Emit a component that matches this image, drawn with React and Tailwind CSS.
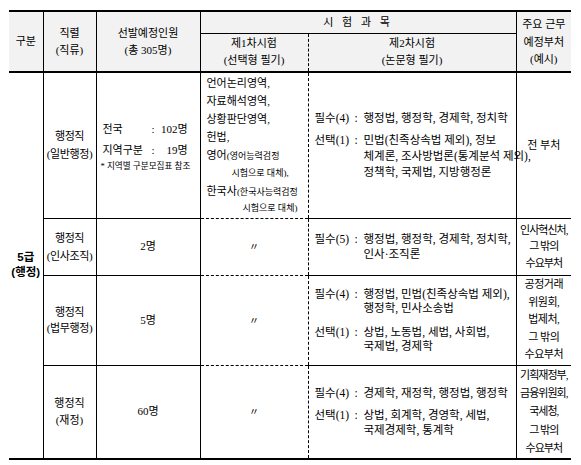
import React from 'react';

const serif = "font-['Liberation_Serif','Noto_Sans_CJK_KR',serif]";

// 2차시험 subject block: label, colon, and hand-broken lines
const Subj = ({ label, lines, className = '' }) => (
  <div className={`flex ${className}`}>
    <span className="w-[40px] shrink-0 whitespace-nowrap">{label}</span>
    <span className="w-[9px] shrink-0">:</span>
    <div>
      {lines.map((l, i) => (
        <div key={i} className="whitespace-nowrap">{l}</div>
      ))}
    </div>
  </div>
);

const Lines = ({ items }) => (
  <>
    {items.map((l, i) => (
      <div key={i} className="whitespace-nowrap">{l}</div>
    ))}
  </>
);

const Ditto = () => <span className="text-[10px]">〃</span>;

export default function App() {
  const th = 'border-black font-normal text-center align-middle p-0';
  const td = 'border-black p-0 align-middle';

  return (
    <div className={`bg-white w-[581px] h-[465px] pl-[9px] pt-[10px] text-black text-[11px] ${serif}`}>
      <table className="border-collapse table-fixed w-[562px]">
        <colgroup>
          <col className="w-[34px]" />
          <col className="w-[53px]" />
          <col className="w-[104px]" />
          <col className="w-[108px]" />
          <col className="w-[208px]" />
          <col className="w-[55px]" />
        </colgroup>
        <thead className="bg-[#f2f2f2]">
          <tr className="h-[22px] border-t-2 border-black">
            <th rowSpan={2} className={`${th} border-r leading-[17px]`}>구분</th>
            <th rowSpan={2} className={`${th} border-r leading-[17px]`}>
              <div>직렬</div>
              <div>(직류)</div>
            </th>
            <th rowSpan={2} className={`${th} border-r leading-[17px]`}>
              <div>선발예정인원</div>
              <div>(총 305명)</div>
            </th>
            <th colSpan={2} className={`${th} border-r border-b tracking-[3px]`}>
              시 험 과 목
            </th>
            <th rowSpan={2} className={`${th} leading-[17.5px] pt-[2px]`}>
              <div className="whitespace-nowrap">주요 근무</div>
              <div>예정부처</div>
              <div>(예시)</div>
            </th>
          </tr>
          <tr className="h-[39px] border-b-2 border-black">
            <th className={`${th} border-r border-dashed leading-[17px]`}>
              <div>제1차시험</div>
              <div>(선택형 필기)</div>
            </th>
            <th className={`${th} border-r leading-[17px]`}>
              <div>제2차시험</div>
              <div>(논문형 필기)</div>
            </th>
          </tr>
        </thead>
        <tbody>
          {/* 일반행정 */}
          <tr className="h-[146px]">
            <td rowSpan={4} className={`${td} border-r text-center font-bold text-[11.5px] leading-[15px] font-['Liberation_Sans','Noto_Sans_CJK_KR',sans-serif]`}>
              <div>5급</div>
              <div>(행정)</div>
            </td>
            <td className={`${td} border-r border-b text-center leading-[18px] tracking-[-0.4px]`}>
              <div>행정직</div>
              <div className="whitespace-nowrap">(일반행정)</div>
            </td>
            <td className={`${td} border-r border-b pl-[6px]`}>
              <div className="flex leading-[18px] pt-[2px]">
                <span className="w-[49px]">전국</span>
                <span className="w-[5px]">:</span>
                <span className="w-[31px] text-right">102명</span>
              </div>
              <div className="flex leading-[18px] mt-[3px]">
                <span className="w-[49px]">지역구분</span>
                <span className="w-[5px]">:</span>
                <span className="w-[31px] text-right">19명</span>
              </div>
              <div className="text-[8.6px] leading-[14px] whitespace-nowrap -ml-[2px]">* 지역별 구분모집표 참조</div>
            </td>
            <td className={`${td} border-r border-b border-dashed pl-[6px] leading-[18px]`}>
              <div className="h-[18px]">언어논리영역,</div>
              <div className="h-[18px]">자료해석영역,</div>
              <div className="h-[18px]">상황판단영역,</div>
              <div className="h-[18px]">헌법,</div>
              <div className="h-[18px] whitespace-nowrap">영어<span className="text-[9px] leading-none">(영어능력검정</span></div>
              <div className="h-[18px] text-[9px] pl-[25px] whitespace-nowrap">시험으로 대체),</div>
              <div className="h-[18px] whitespace-nowrap">한국사<span className="text-[9px] leading-none">(한국사능력검정</span></div>
              <div className="h-[17px] text-[9px] leading-[16px] pl-[36px] whitespace-nowrap">시험으로 대체)</div>
            </td>
            <td className={`${td} border-r border-b pl-[6px] text-[11.5px] leading-[16px]`}>
              <Subj label="필수(4)" lines={['행정법, 행정학, 경제학, 정치학']} />
              <Subj
                className="mt-[6px]"
                label="선택(1)"
                lines={['민법(친족상속법 제외), 정보', '체계론, 조사방법론(통계분석 제외),', '정책학, 국제법, 지방행정론']}
              />
            </td>
            <td className={`${td} border-b text-center`}>전 부처</td>
          </tr>

          {/* 인사조직 */}
          <tr className="h-[57px]">
            <td className={`${td} border-r border-b text-center leading-[18px] tracking-[-0.4px]`}>
              <div>행정직</div>
              <div className="whitespace-nowrap">(인사조직)</div>
            </td>
            <td className={`${td} border-r border-b text-center`}>2명</td>
            <td className={`${td} border-r border-b border-dashed text-center`}><Ditto /></td>
            <td className={`${td} border-r border-b pl-[6px] text-[11.5px] leading-[15px]`}>
              <Subj label="필수(5)" lines={['행정법, 행정학, 경제학, 정치학,', '인사·조직론']} />
            </td>
            <td className={`${td} border-b text-center leading-[16.5px] tracking-[-1px]`}>
              <Lines items={['인사혁신처,', '그 밖의', '수요부처']} />
            </td>
          </tr>

          {/* 법무행정 */}
          <tr className="h-[90px]">
            <td className={`${td} border-r border-b text-center leading-[16px] tracking-[-0.4px]`}>
              <div>행정직</div>
              <div className="whitespace-nowrap">(법무행정)</div>
            </td>
            <td className={`${td} border-r border-b text-center`}>5명</td>
            <td className={`${td} border-r border-b border-dashed text-center`}><Ditto /></td>
            <td className={`${td} border-r border-b pl-[6px] text-[11.5px] leading-[14.5px]`}>
              <Subj label="필수(4)" lines={['행정법, 민법(친족상속법 제외),', '행정학, 민사소송법']} />
              <Subj className="mt-[9px]" label="선택(1)" lines={['상법, 노동법, 세법, 사회법,', '국제법, 경제학']} />
            </td>
            <td className={`${td} border-b text-center leading-[17.5px] tracking-[-0.5px]`}>
              <Lines items={['공정거래', '위원회,', '법제처,', '그 밖의', '수요부처']} />
            </td>
          </tr>

          {/* 재정 */}
          <tr className="h-[93px] border-b-2 border-black">
            <td className={`${td} border-r text-center leading-[17px]`}>
              <div>행정직</div>
              <div>(재정)</div>
            </td>
            <td className={`${td} border-r text-center`}>60명</td>
            <td className={`${td} border-r border-dashed text-center`}><Ditto /></td>
            <td className={`${td} border-r pl-[6px] text-[11.5px] leading-[15px]`}>
              <Subj label="필수(4)" lines={['경제학, 재정학, 행정법, 행정학']} />
              <Subj className="mt-[7px]" label="선택(1)" lines={['상법, 회계학, 경영학, 세법,', '국제경제학, 통계학']} />
            </td>
            <td className={`${td} text-center leading-[18.4px] tracking-[-1px]`}>
              <Lines items={['기획재정부,', '금융위원회,', '국세청,', '그 밖의', '수요부처']} />
            </td>
          </tr>
        </tbody>
      </table>
    </div>
  );
}
